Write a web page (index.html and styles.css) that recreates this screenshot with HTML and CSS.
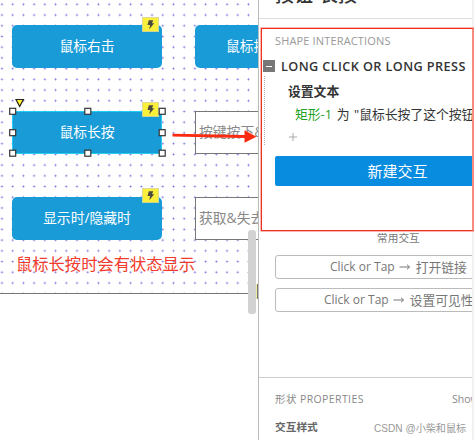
FILE: index.html
```html
<!DOCTYPE html>
<html lang="zh">
<head>
<meta charset="utf-8">
<title>Shape interactions</title>
<link rel="stylesheet" href="styles.css">
</head>
<body>
<svg class="defs" width="0" height="0">
  <symbol id="bolt" viewBox="0 0 16 14"><rect x=".4" y=".4" width="15.2" height="13.2" fill="#faf03c" stroke="#d8d59a" stroke-width=".8"/><path d="M6.400 3h4.200L9.400 5.900h2.100L6.800 11.400l.9-3.900H5.200z" fill="#4b4a3e"/></symbol>
</svg>
<div class="app">
  <main class="canvas">
    <div class="page"></div>
    <div class="node solid n1">鼠标右击</div>
    <div class="node solid n2">鼠标按</div>
    <div class="node solid selected n3">鼠标长按</div>
    <div class="node outline n4">按键按下&amp;</div>
    <div class="node solid n5">显示时/隐藏时</div>
    <div class="node outline n6">获取&amp;失去</div>
    <svg class="bolt b1"><use href="#bolt"/></svg>
    <svg class="bolt b2"><use href="#bolt"/></svg>
    <svg class="bolt b3"><use href="#bolt"/></svg>
    <svg class="handles" width="180" height="70" viewBox="0 90 180 70">
      <path d="M16 99.500h7.400L19.700 106.500z" fill="#fff42c" stroke="#222" stroke-width="1.200"/>
      <g fill="#fff" stroke="#333" stroke-width="1.200">
        <rect x="9.700" y="108.300" width="6" height="6"/><rect x="84.800" y="108.300" width="6" height="6"/><rect x="159.200" y="108.300" width="6" height="6"/>
        <rect x="9.700" y="129.700" width="6" height="6"/><rect x="159.200" y="129.700" width="6" height="6"/>
        <rect x="9.700" y="150.200" width="6" height="6"/><rect x="84.800" y="150.200" width="6" height="6"/><rect x="159.200" y="150.200" width="6" height="6"/>
      </g>
    </svg>
    <div class="caption">鼠标长按时会有状态显示</div>
    <div class="clip-bolt"></div>
    <div class="scrollbar"></div>
    <svg class="arrow" width="90" height="16" viewBox="170 128 90 16"><path d="M172.500 133.800L244.500 135.100V130.300L256.500 136.700L244.500 142.700V138.100L172.500 136.600z" fill="#fb2a10"/></svg>
  </main>
  <aside class="panel">
    <header class="title"><span>按钮-长按</span></header>
    <section class="interactions">
      <h2 class="label"><span>SHAPE INTERACTIONS</span></h2>
      <div class="event"><i class="toggle"></i><span>LONG CLICK OR LONG PRESS</span></div>
      <div class="actions">
        <div class="action">设置文本</div>
        <div class="detail"><b>矩形-1</b> 为 "鼠标长按了这个按钮</div>
        <svg class="plus" width="8" height="8" viewBox="0 0 8 8"><path d="M4 0v8M0 4h8" stroke="#aaa" fill="none"/></svg>
      </div>
      <div class="create">新建交互</div>
    </section>
    <section class="common">
      <h3>常用交互</h3>
      <div class="quick"><span>Click or Tap</span><svg width="12" height="8" viewBox="0 0 12 8"><path d="M.5 4H10.500M8 1.700L10.500 4L8 6.300" fill="none" stroke="#777"/></svg><em>打开链接</em></div>
      <div class="quick second"><span>Click or Tap</span><svg width="12" height="8" viewBox="0 0 12 8"><path d="M.5 4H10.500M8 1.700L10.500 4L8 6.300" fill="none" stroke="#777"/></svg><em>设置可见性</em></div>
    </section>
    <section class="properties">
      <div class="prop-head"><span>形状 PROPERTIES</span><span class="show">Show</span></div>
      <div class="prop-row"><strong>交互样式</strong><span class="mark">CSDN @小柴和鼠标</span></div>
    </section>
    <div class="edge"></div>
    <div class="highlight"></div>
  </aside>
</div>
</body>
</html>
```
FILE: styles.css
```css
* { box-sizing: border-box; }
body { margin: 0; overflow: hidden; background: #fff; font-family: "Open Sans", "Noto Sans CJK SC", sans-serif; }
.defs { position: absolute; }
.app { display: flex; width: 474px; height: 440px; overflow: hidden; }
.canvas { position: relative; flex: 0 0 258px; height: 440px; overflow: hidden; }
.page {
  height: 294px;
  border-bottom: 1px solid #777;
  background-image: radial-gradient(circle, #7070dc 0, #7c7ce0 .7px, transparent 1.250px);
  background-size: 10.730px 10.720px;
  background-position: -3.400px -1.060px;
}
.node { position: absolute; height: 43px; display: flex; align-items: center; justify-content: center; font-size: 13.800px; white-space: nowrap; }
.solid { background: #199bd7; color: #fff; border-radius: 5px; }
.outline { border: 1px solid #777; background: #fff; color: #888; justify-content: flex-start; padding-left: 3px; width: 90px; }
.n1 { left: 12px; top: 25px; width: 150px; }
.n2 { left: 195px; top: 25px; width: 90px; justify-content: flex-start; padding-left: 31px; }
.n3 { left: 12px; top: 111px; width: 150px; }
.n4 { left: 195px; top: 111px; }
.n5 { left: 12px; top: 197px; width: 150px; }
.n6 { left: 195px; top: 197px; }
.solid, .outline { padding-bottom: 3px; }
.selected { border: 1px solid #22cdf2; border-radius: 0; }
.bolt { position: absolute; left: 142px; width: 17px; height: 15px; }
.b1 { top: 17px; }
.b2 { top: 102px; }
.b3 { top: 188px; }
.handles { position: absolute; left: 0; top: 90px; }
.caption { position: absolute; left: 16px; top: 252px; font-size: 16.300px; line-height: 24px; color: #f23b2b; white-space: nowrap; }
.scrollbar { position: absolute; left: 248px; top: 230px; width: 8px; height: 84px; border-radius: 3px; background: #d2d2d2; }
.clip-bolt { position: absolute; left: 249px; top: 284px; width: 9px; height: 15px; background: #f0ee9b; border-right: 1px solid #777; }
.arrow { position: absolute; left: 170px; top: 128px; }
.panel { position: relative; flex: 0 0 216px; height: 440px; overflow: hidden; border-left: 1px solid #bbb; background: #fff; white-space: nowrap; color: #333; }
.title { display: flex; height: 19px; border-bottom: 1px solid #ddd; padding-left: 16px; font-size: 19px; line-height: 24px; }
.title span { display: block; margin-top: -17px; height: 24px; font-weight: 500; }
.interactions { height: 212px; padding: 14px 0 0 16px; }
.label { margin: 0; font-size: 11px; line-height: 15px; font-weight: 400; letter-spacing: .15px; color: #999; }
.event { display: flex; align-items: center; gap: 6px; margin: 8px 0 0 -12px; height: 20px; font-size: 12.700px; font-weight: 600; letter-spacing: .4px; }
.toggle { width: 12px; height: 12px; background: #777; display: grid; place-items: center; }
.toggle::after { content: ""; width: 6px; height: 1px; background: #fff; }
.actions { margin-left: -11px; height: 69px; padding: 5px 0 0 23px; border-left: 1px dotted #aaa; }
.action { font-size: 12.800px; line-height: 20px; font-weight: 700; }
.detail { margin-left: 7px; font-size: 12.800px; line-height: 26px; word-spacing: 1.300px; }
.detail b { color: #23a023; font-weight: 400; }
.plus { display: block; margin-top: 6px; margin-left: 1px; }
.create { margin-top: 11px; height: 30px; width: 245px; border-radius: 2px; background: #078ce0; color: #fff; text-align: center; font-size: 15px; line-height: 30px; }
.common { height: 146px; padding-left: 16px; color: #777; }
.common h3 { margin: 0 0 0 102px; font-size: 10.700px; line-height: 14px; font-weight: 400; }
.quick { margin-top: 10px; height: 24px; width: 245px; border: 1px solid #bbb; border-radius: 3px; display: flex; align-items: center; padding-left: 54px; font-size: 12px; }
.quick em { font-style: normal; font-size: 12.800px; }
.quick span, .quick em { position: relative; top: -1px; }
.quick svg { margin: 0 5px 0 4px; }
.quick.second { margin-top: 9px; padding-left: 48px; }
.properties { border-top: 1px solid #ccc; padding: 13px 0 0 16px; color: #888; font-size: 10.500px; }
.prop-head { display: flex; line-height: 16px; }
.prop-head span:first-child { flex: 0 0 177px; letter-spacing: .4px; }
.prop-row { display: flex; margin-top: 12px; line-height: 16px; }
.prop-row strong { flex: 0 0 99px; font-size: 10.700px; color: #666; }
.mark { position: relative; top: 2px; font-size: 10.100px; color: #999; font-family: "Liberation Sans", "Noto Sans CJK SC", sans-serif; }
.edge { position: absolute; right: 0; top: 0; width: 2px; height: 440px; background: #f1f1f1; }
.highlight { position: absolute; left: 2px; top: 28px; width: 213px; height: 203px; border: 1px solid #ee3020; border-right: 2px solid #f98a7e; box-shadow: 0 0 0 .6px #f8877c; }
```
